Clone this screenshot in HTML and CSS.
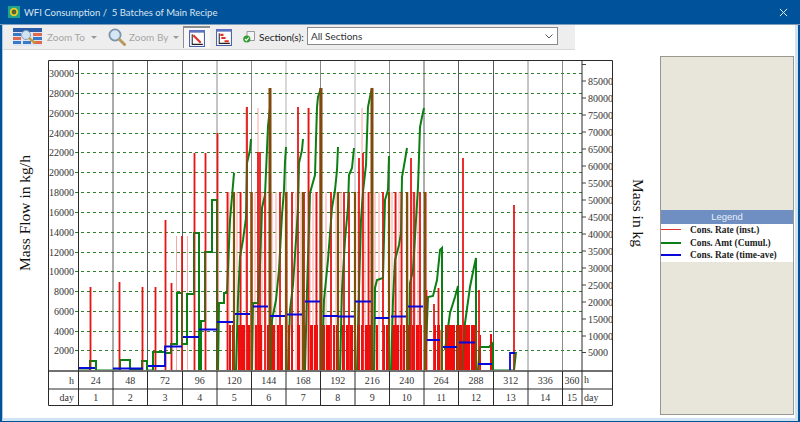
FILE: index.html
```html
<!DOCTYPE html>
<html lang="en">
<head>
<meta charset="utf-8">
<title>WFI Consumption</title>
<link rel="stylesheet" href="styles.css">
</head>
<body>
<div class="window">
  <header class="titlebar">
    <svg class="app-icon" viewBox="0 0 12 12"><rect width="12" height="12" fill="#1aa58c"/><circle cx="6" cy="6" r="4.2" fill="#e8c92c"/><circle cx="6" cy="6" r="2.4" fill="#3b6f3a"/><circle cx="6" cy="6" r="1" fill="#b03a2e"/></svg>
    <span class="title">WFI Consumption /&nbsp; 5 Batches of Main Recipe</span>
    <svg class="close" viewBox="0 0 10 10"><path d="M1 1L9 9M9 1L1 9"/></svg>
  </header>
  <div class="content">
    <div class="toolbar">
      <svg class="ico-zoomto" viewBox="0 0 29 18">
        <rect width="29" height="18" fill="#dfe6f2"/>
        <rect width="29" height="4" fill="#2a5ea8"/>
        <rect x="0" y="5" width="8" height="3" fill="#3a78c8"/><rect x="20" y="5" width="9" height="3" fill="#e06a50"/>
        <rect x="0" y="9" width="8" height="3" fill="#e06a50"/><rect x="20" y="9" width="9" height="3" fill="#3a78c8"/>
        <rect x="0" y="13" width="8" height="3" fill="#3a78c8"/><rect x="10" y="13" width="8" height="3" fill="#3a78c8"/><rect x="20" y="13" width="9" height="3" fill="#e06a50"/>
        <circle cx="13" cy="7" r="4.5" fill="#cfe3f4" stroke="#8aa0b0"/><path d="M16 10L22 15" stroke="#c49a3a" stroke-width="2.4"/>
      </svg>
      <span class="tool-label">Zoom To</span><span class="caret"></span>
      <svg class="ico-mag" viewBox="0 0 18 18"><circle cx="7" cy="7" r="5.6" fill="#d5e6f5" stroke="#7d94ab" stroke-width="1.8"/><path d="M11.5 11.5L16.5 16.5" stroke="#b79a5c" stroke-width="3" stroke-linecap="round"/></svg>
      <span class="tool-label">Zoom By</span><span class="caret"></span>
      <div class="tool-btn pressed">
        <svg class="ico-chart" viewBox="0 0 15 16"><rect x=".5" y=".5" width="14" height="15" fill="#fff" stroke="#4a5fa8"/><rect width="15" height="2.5" fill="#5a72c0"/><path d="M3 4V13.5H13" fill="none" stroke="#222"/><path d="M4 5L11 12" stroke="#e0302a" stroke-width="2"/></svg>
      </div>
      <div class="tool-btn">
        <svg class="ico-chart" viewBox="0 0 15 16"><rect x=".5" y=".5" width="14" height="15" fill="#fff" stroke="#4a5fa8"/><rect width="15" height="2.5" fill="#5a72c0"/><path d="M3 4V13.5H13" fill="none" stroke="#222"/><path d="M4 5.500H7M5 8.500H9M8 11.500H12" stroke="#e0302a" stroke-width="2"/></svg>
      </div>
      <svg class="ico-doc" viewBox="0 0 12 12"><path d="M4 .5H11.500V9.500H4Z" fill="#f4f4f4" stroke="#999"/><circle cx="3.800" cy="8" r="3.600" fill="#2f9b2f"/><path d="M2 8L3.400 9.500L5.800 6.500" fill="none" stroke="#fff" stroke-width="1.200"/></svg>
      <span class="section-label">Section(s):</span>
      <div class="select"><span>All Sections</span><svg class="chev" viewBox="0 0 8 5"><path d="M.5 .5L4 4L7.500 .5"/></svg></div>
    </div>
    <div class="main">
      <svg class="chart" viewBox="3 52 650 366">
        <!-- vertical day lines -->
        <path class="v-dark" d="M113 60V371M147.500 60V371M182.500 60V371M424 60V371M458.500 60V371M493.500 60V371"/>
        <path class="v-mid" d="M217 60V371M251.500 60V371M320.500 60V371M389.500 60V371M528 60V371M562.500 60V371"/>
        <path class="v-light" d="M286 60V371M355 60V371"/>
        <!-- horizontal grid -->
        <path class="grid" d="M75 73.500H582M75 93.500H582M75 133.500H582M75 113.500H582M75 152.500H582M75 172.500H582M75 192.500H582M75 212.500H582M75 232.500H582M75 252.500H582M75 271.500H582M75 291.500H582M75 311.500H582M75 331.500H582M75 350.500H582"/>
        <!-- consumption rate, instantaneous -->
        <path class="pink" d="M229 371V192M234 371V192M237 371V192M241 371V192M246 371V192M252 371V192M255 371V192M262 371V192M266 371V192M272 371V192M276 371V192M280 371V192M287 371V192M292 371V192M296 371V192M301 371V192M304 371V192M310 371V192M313 371V192M316 371V192M321 371V192M326 371V192M331 371V192M336 371V192M341 371V192M344 371V192M349 371V192M355 371V192M358 371V192M365 371V192M369 371V192M375 371V192M379 371V192M383 371V192M389 371V192M392 371V192M396 371V192M399 371V192M402 371V192M408 371V192M412 371V192M415 371V192M418 371V192M420 371V192M426 371V192M176.500 371V236M187.500 371V236M362 371V108M246 371V107M258 371V108M309 371V108"/>
        <g id="reds">
          <path class="red-block" d="M229 325H231V371H229ZM232 325H234V371H232ZM238 325H240V371H238ZM241 325H245V371H241ZM247 325H250V371H247ZM255 325H257V371H255ZM258 325H262V371H258ZM267 325H270V371H267ZM272 325H275V371H272ZM277 325H279V371H277ZM280 325H283V371H280ZM288 325H290V371H288ZM291 325H293V371H291ZM297 325H300V371H297ZM303 325H305V371H303ZM310 325H313V371H310ZM314 325H318V371H314ZM322 325H325V371H322ZM326 325H330V371H326ZM333 325H335V371H333ZM336 325H338V371H336ZM342 325H345V371H342ZM346 325H349V371H346ZM350 325H353V371H350ZM357 325H360V371H357ZM361 325H363V371H361ZM365 325H368V371H365ZM369 325H372V371H369ZM376 325H378V371H376ZM383 325H385V371H383ZM386 325H388V371H386ZM392 325H395V371H392ZM396 325H399V371H396ZM400 325H402V371H400ZM403 325H405V371H403ZM408 325H411V371H408ZM412 325H415V371H412ZM416 325H419V371H416ZM420 325H422V371H420ZM434 325H436V371H434ZM437 325H440V371H437ZM445 325H455V371H445ZM456 325H462V371H456ZM463 325H470V371H463ZM471 325H477V371H471ZM480 335H481V371H480ZM490 334H492V371H490Z"/>
          <path class="red" d="M90.500 371V287M119.500 371V282M142.500 371V287M155.500 371V287M165.500 371V220M171.500 371V283M182 371V236M194.500 371V153M205.500 371V153M217.500 371V133M227.500 371V192M234 371V192M240.500 371V192M247 371V107M251.500 371V192M258 371V152M260 371V152M265 371V192M270 371V88M280 371V192M286.500 371V192M292 371V192M298 371V107M304 371V192M308.500 371V108M316.500 371V192M320.500 371V88M331 371V192M338 371V192M344 371V192M349 371V192M355 371V192M359 371V158M363 371V153M368.500 371V192M372 371V88M383 371V192M389 371V192M395.500 371V192M401.500 371V192M407 371V192M411 371V158M414 371V192M420 371V192M425.500 371V192M426.500 371V290M434 371V304M438.500 371V288M463 371V158M479 371V290M514 371V205"/>
        </g>
        <!-- consumption amount, cumulative -->
        <path class="green" d="M78 370.500H90V361H96V370.500H120V360H130V369H142V361H147V370.500H153V352H165V353H171V344H177V293H182V344H187V294H194V233H199V370H201V321H205V252H212V200H217V371"/>
        <path class="green" d="M218 371L219 303H224V293H227L230 220L233 185L234 173"/>
        <path class="green" d="M236 371L238 300L240 257L243 240L246 218L247 163L250 150L251 139"/>
        <path class="green" d="M252 371L253 303H258L260 265L262 208L265 195L268 126L270 108"/>
        <path class="green" d="M271 371L272 320L276 300L279 270L282 215L284 190L285 162L286 147"/>
        <path class="green" d="M288 371L290 310L293 285L296 240L298 208L299 163L302 150L303 139"/>
        <path class="green" d="M305 371L307 290L310 193L315 175L316 140L317 107L318 97L321 88"/>
        <path class="green" d="M322 371L324 300L328 260L332 208L335 190L337 170L338 147"/>
        <path class="green" d="M340 371L342 290L345 240L348 207L349 175L352 168L354 148"/>
        <path class="green" d="M357 371L359 290L361 220L363 192L366 165L368 107L370 97L372 88"/>
        <path class="green" d="M374 371L375 288L377 280L383 278L385 200L388 190L389 156"/>
        <path class="green" d="M391 371L393 300L395 260L399 245L401 233L402 177L405 160L407 148"/>
        <path class="green" d="M409 371L410 283L413 270L416 220L418 187L420 127L422 117L424 108"/>
        <path class="green" d="M425 371L428 297L433 296L437 280L440 250L442 248V371"/>
        <path class="green" d="M445 350L450 313L455 297L458 286V371"/>
        <path class="green" d="M462 370L465 323L470 287L474 267L476 258V371"/>
        <path class="green" d="M478 370L480 347H489L493 343V370.500H514L516 352"/>
        <use href="#reds" class="red-over"/>
        <path class="brown" d="M234 371V192M251.500 371V192M286 371V192M303 371V192M338 371V192M355 371V192M389 371V192M407 371V192M425 371V192M441.500 371V330M458 371V330M476 371V330"/>
        <path class="brown-thick" d="M270 371V88M321 371V88M372 371V88"/>
        <!-- consumption rate, time averaged -->
        <path class="blue" d="M79 368H95M113 368.500H143M148 366H165M165 367V346.500H182M183 337H199M199 329.500H217M217 322H233M235 314H250M253 306.500H268M270 316H285M287 314.500H302M305 301.500H320M323 316H338M338 316.500H354M355 301.500H371M375 318H389M391 316.500H406M408 306.500H423M427 340H440M443 347H457M459 342.500H475M478 364H492M510 370V353H515"/>
        <!-- right axis ticks -->
        <path class="axis" d="M582 64.500H586M582 81H586M582 98H586M582 115H586M582 132H586M582 149H586M582 166H586M582 183H586M582 200H586M582 217H586M582 234H586M582 251H586M582 268H586M582 285H586M582 302H586M582 319H586M582 336H586M582 352.500H586"/>
        <!-- frame and table -->
        <path class="axis-gray" d="M48 371H613"/>
        <path class="frame" d="M48.500 60.500H612.500V405.500H48.500ZM78.500 60V405M582 60V405M48 389H613"/>
        <path class="frame" d="M113 371V405M147.500 371V405M182.500 371V405M217 371V405M251.500 371V405M286 371V405M320.500 371V405M355 371V405M389.500 371V405M424 371V405M458.500 371V405M493.500 371V405M528 371V405M562.500 371V405"/>
        <!-- axis labels -->
        <g class="lab-left">
          <text x="74" y="77">30000</text><text x="74" y="97">28000</text><text x="74" y="117">26000</text><text x="74" y="137">24000</text><text x="74" y="156">22000</text><text x="74" y="176">20000</text><text x="74" y="196">18000</text><text x="74" y="216">16000</text><text x="74" y="236">14000</text><text x="74" y="256">12000</text><text x="74" y="275">10000</text><text x="74" y="295">8000</text><text x="74" y="315">6000</text><text x="74" y="335">4000</text><text x="74" y="354">2000</text>
        </g>
        <g class="lab-right">
          <text x="588" y="84.500">85000</text><text x="588" y="101.500">80000</text><text x="588" y="118.500">75000</text><text x="588" y="135.500">70000</text><text x="588" y="152.500">65000</text><text x="588" y="169.500">60000</text><text x="588" y="186.500">55000</text><text x="588" y="203.500">50000</text><text x="588" y="220.500">45000</text><text x="588" y="237.500">40000</text><text x="588" y="254.500">35000</text><text x="588" y="271.500">30000</text><text x="588" y="288.500">25000</text><text x="588" y="305.500">20000</text><text x="588" y="322.500">15000</text><text x="588" y="339.500">10000</text><text x="588" y="356">5000</text>
        </g>
        <g class="lab-cell">
          <text x="95.800" y="384">24</text><text x="130.300" y="384">48</text><text x="165" y="384">72</text><text x="199.800" y="384">96</text><text x="234.300" y="384">120</text><text x="268.800" y="384">144</text><text x="303.300" y="384">168</text><text x="337.800" y="384">192</text><text x="372.300" y="384">216</text><text x="406.800" y="384">240</text><text x="441.300" y="384">264</text><text x="476" y="384">288</text><text x="510.800" y="384">312</text><text x="545.300" y="384">336</text><text x="572" y="384">360</text>
          <text x="95.800" y="401">1</text><text x="130.300" y="401">2</text><text x="165" y="401">3</text><text x="199.800" y="401">4</text><text x="234.300" y="401">5</text><text x="268.800" y="401">6</text><text x="303.300" y="401">7</text><text x="337.800" y="401">8</text><text x="372.300" y="401">9</text><text x="406.800" y="401">10</text><text x="441.300" y="401">11</text><text x="476" y="401">12</text><text x="510.800" y="401">13</text><text x="545.300" y="401">14</text><text x="572" y="401">15</text>
        </g>
        <text class="lab-left" x="74" y="384">h</text>
        <text class="lab-left" x="74" y="401">day</text>
        <text class="lab-right" x="584" y="383">h</text>
        <text class="lab-right" x="584" y="401">day</text>
        <text class="axis-title" transform="translate(30 213) rotate(-90)">Mass Flow in kg/h</text>
        <text class="axis-title" transform="translate(633 213) rotate(90)">Mass in kg</text>
      </svg>
      <aside class="legend-panel">
        <div class="legend">
          <div class="legend-head">Legend</div>
          <ul class="legend-list">
            <li class="legend-row"><span class="swatch swatch-red"></span>Cons. Rate (inst.)</li>
            <li class="legend-row"><span class="swatch swatch-green"></span>Cons. Amt (Cumul.)</li>
            <li class="legend-row"><span class="swatch swatch-blue"></span>Cons. Rate (time-ave)</li>
          </ul>
        </div>
      </aside>
    </div>
  </div>
</div>
</body>
</html>
```
FILE: styles.css
```css
* { box-sizing: border-box; }
html, body { margin: 0; padding: 0; }
body { width: 800px; height: 422px; overflow: hidden; background: #fff; font-family: Lato, "Liberation Sans", sans-serif; }

.window { width: 800px; height: 422px; display: flex; flex-direction: column; background: #00539b; }

.titlebar { height: 25px; flex: none; display: flex; align-items: center; padding: 0 8px; background: #00539b; border-bottom: 1px solid #7f9dbd; }
.app-icon { width: 12px; height: 12px; flex: none; }
.title { margin-left: 4px; color: #d9e4ef; font-size: 9.500px; white-space: nowrap; }
.close { width: 9px; height: 9px; margin-left: auto; margin-right: 4px; flex: none; }
.close path { stroke: #e6eef5; stroke-width: 1.100; fill: none; }

.content { flex: 1; margin: 0 2px 1px 2px; background: #fff; border-left: 1px solid #a8c8e0; border-right: 3px solid #cfe4f2; border-bottom: 3px solid #cfe4f2; display: flex; flex-direction: column; min-height: 0; }

.toolbar { width: 572px; height: 25px; flex: none; display: flex; align-items: center; background: #eeeeee; border-bottom: 1px solid #d8d8d8; padding-left: 10px; }
.ico-zoomto { width: 29px; height: 18px; flex: none; }
.tool-label { color: #a6a6a6; font-size: 10px; margin-left: 5px; width: 38px; white-space: nowrap; }
.caret { width: 0; height: 0; border-left: 3px solid transparent; border-right: 3px solid transparent; border-top: 3px solid #9a9a9a; margin-left: 6px; flex: none; }
.ico-mag { width: 18px; height: 18px; margin-left: 11px; flex: none; }
.ico-mag + .tool-label { margin-left: 3px; }
.tool-btn { width: 27px; height: 22px; margin-left: 4px; display: flex; align-items: center; justify-content: center; flex: none; }
.tool-btn + .tool-btn { margin-left: 0; }
.pressed { background: #f7f7f7; border-left: 1px solid #8e8e8e; border-top: 2px solid #8e8e8e; }
.ico-chart { width: 16px; height: 17px; }
.ico-doc { width: 12px; height: 12px; margin-left: 6px; flex: none; }
.section-label { margin-left: 4px; color: #222; font-size: 10px; width: 48px; white-space: nowrap; }
.select { width: 251px; height: 18px; align-self: flex-start; margin-top: 2px; display: flex; align-items: center; justify-content: space-between; padding: 0 4px 0 3px; background: #fff; border: 1px solid #8a8a8a; color: #333; font-size: 10px; }
.chev { width: 8px; height: 5px; }
.chev path { fill: none; stroke: #555; }

.main { flex: 1; display: flex; min-height: 0; }
.chart { width: 650px; height: 366px; margin-top: 2px; flex: none; display: block; }

.grid { stroke: #2f7f2f; stroke-dasharray: 3 3; fill: none; }
.v-dark { stroke: #585858; fill: none; }
.v-mid { stroke: #8a8a8a; fill: none; }
.v-light { stroke: #b0b0b0; fill: none; }
.pink { stroke: #ffa4a4; stroke-width: 1; fill: none; }
.red-block { fill: #f20c0c; }
.red { stroke: #e81414; stroke-width: 1.600; fill: none; }
.red-over { opacity: .5; }
.green { stroke: #0c7f14; stroke-width: 2; fill: none; }
.brown { stroke: #7d5208; stroke-width: 2.200; fill: none; }
.brown-thick { stroke: #80480c; stroke-width: 3; fill: none; }
.blue { stroke: #0808d8; stroke-width: 1.800; fill: none; }
.axis { stroke: #444; fill: none; }
.axis-gray { stroke: #707070; stroke-width: 2; fill: none; }
.frame { stroke: #2a2a2a; fill: none; }
.lab-left, .lab-right, .lab-cell { font-family: "Liberation Serif", serif; font-size: 10px; fill: #333; }
.lab-left { text-anchor: end; }
.lab-right { text-anchor: start; }
.lab-cell { text-anchor: middle; }
.axis-title { font-family: "Liberation Serif", serif; font-size: 15.500px; fill: #111; text-anchor: middle; }

.legend-panel { width: 134px; height: 359px; margin: 6px 0 0 7px; flex: none; display: flex; flex-direction: column; justify-content: center; background: #e8e6db; border: 1px solid #999890; }
.legend { background: #fff; height: 52px; }
.legend-head { height: 14px; background: #6f8fc3; color: #e8eef8; font-family: "Liberation Sans", sans-serif; font-size: 9.500px; line-height: 14px; text-align: center; }
.legend-list { list-style: none; margin: 0; padding: 0; }
.legend-row { height: 12.700px; display: flex; align-items: center; font-family: "Liberation Serif", serif; font-weight: bold; font-size: 9.400px; color: #222; white-space: nowrap; }
.swatch { width: 20px; height: 2px; margin-right: 9px; flex: none; }
.swatch-red { border-top: 1px solid #e03030; }
.swatch-green { background: #0c7f14; }
.swatch-blue { background: #0808d8; }
```
